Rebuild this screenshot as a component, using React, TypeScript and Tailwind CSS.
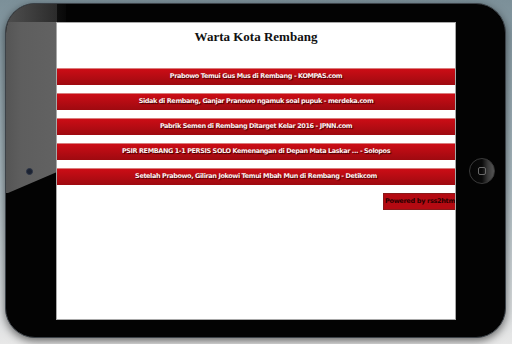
import React from 'react';

const headlines = [
  'Prabowo Temui Gus Mus di Rembang - KOMPAS.com',
  'Sidak di Rembang, Ganjar Pranowo ngamuk soal pupuk - merdeka.com',
  'Pabrik Semen di Rembang Ditarget Kelar 2016 - JPNN.com',
  'PSIR REMBANG 1-1 PERSIS SOLO Kemenangan di Depan Mata Laskar ... - Solopos',
  'Setelah Prabowo, Giliran Jokowi Temui Mbah Mun di Rembang - Detikcom',
];

const App: React.FC = () => {
  return (
    <div className="w-[512px] h-[344px] overflow-hidden bg-gradient-to-b from-[#7c9099] via-[#a6b6bd] to-[#e8e8e8] pt-[3px] pl-[5px]">
      <div className="relative w-[501px] h-[335px] rounded-[30px] bg-[#030303] border border-[#3c4248] shadow-[0_3px_8px_rgba(0,0,0,0.55)] overflow-hidden flex pt-[18px] pb-[17px]">
        {/* glare on the left bezel */}
        <svg className="absolute left-0 top-0" width="60" height="200" viewBox="0 0 60 200">
          <defs>
            <linearGradient id="glare" x1="0" y1="0" x2="1" y2="0">
              <stop offset="0" stopColor="#555" />
              <stop offset="0.3" stopColor="#5e5e5e" />
              <stop offset="1" stopColor="#626262" />
            </linearGradient>
            <linearGradient id="topfade" x1="0" y1="0" x2="1" y2="0">
              <stop offset="0" stopColor="#4a4a4a" />
              <stop offset="1" stopColor="#0a0a0a" />
            </linearGradient>
          </defs>
          <polygon points="0,0 51,0 51,168 2,189 0,189" fill="url(#glare)" />
          <rect x="0" y="0" width="60" height="18" fill="url(#topfade)" opacity="0.7" />
        </svg>

        <div className="relative w-[50px] flex items-center justify-center">
          <div className="w-[7px] h-[7px] rounded-full bg-[#1b2231] border border-[#2c3446] mr-[3px]" />
        </div>

        <div className="relative w-[400px] h-[298px] bg-white border border-[#a8a8a8] overflow-hidden flex flex-col">
          <h1 className="text-center font-['Liberation_Serif',serif] font-bold text-[13px] text-[#111] mt-[6px] leading-[16px]">
            Warta Kota Rembang
          </h1>
          <div className="mt-[23px] flex flex-col gap-[8px]">
            {headlines.map(h => (
              <div
                key={h}
                className="h-[17px] bg-gradient-to-b from-[#cc0d16] to-[#9e0a10] border-t border-t-[#da7c7c] flex items-center justify-center font-['DejaVu_Sans',sans-serif] font-bold text-[6.5px] tracking-[-0.4px] text-[#fff0f0] [text-shadow:1px_1px_1px_#3a0000] whitespace-nowrap"
              >
                {h}
              </div>
            ))}
          </div>
          <div className="mt-[8px] flex justify-end">
            <div className="w-[80px] -mr-[8px] h-[17px] bg-[#b40a12] border border-[#8a1a1a] flex items-center pl-[1px] font-['DejaVu_Sans',sans-serif] font-bold text-[6.5px] tracking-[-0.3px] text-[#2a0000] whitespace-nowrap">
              Powered by rss2html
            </div>
          </div>
        </div>

        <div className="relative flex-1 flex items-center justify-center">
          <div className="w-[26px] h-[26px] rounded-full border border-[#3a3a3a] bg-[linear-gradient(90deg,#050505_0%,#0a0a0a_50%,#3a3a3a_75%,#555_100%)] flex items-center justify-center ml-[2px]">
            <div className="w-[8px] h-[8px] rounded-[2px] border border-[#6a6a6a]" />
          </div>
        </div>
      </div>
    </div>
  );
};

export default App;
